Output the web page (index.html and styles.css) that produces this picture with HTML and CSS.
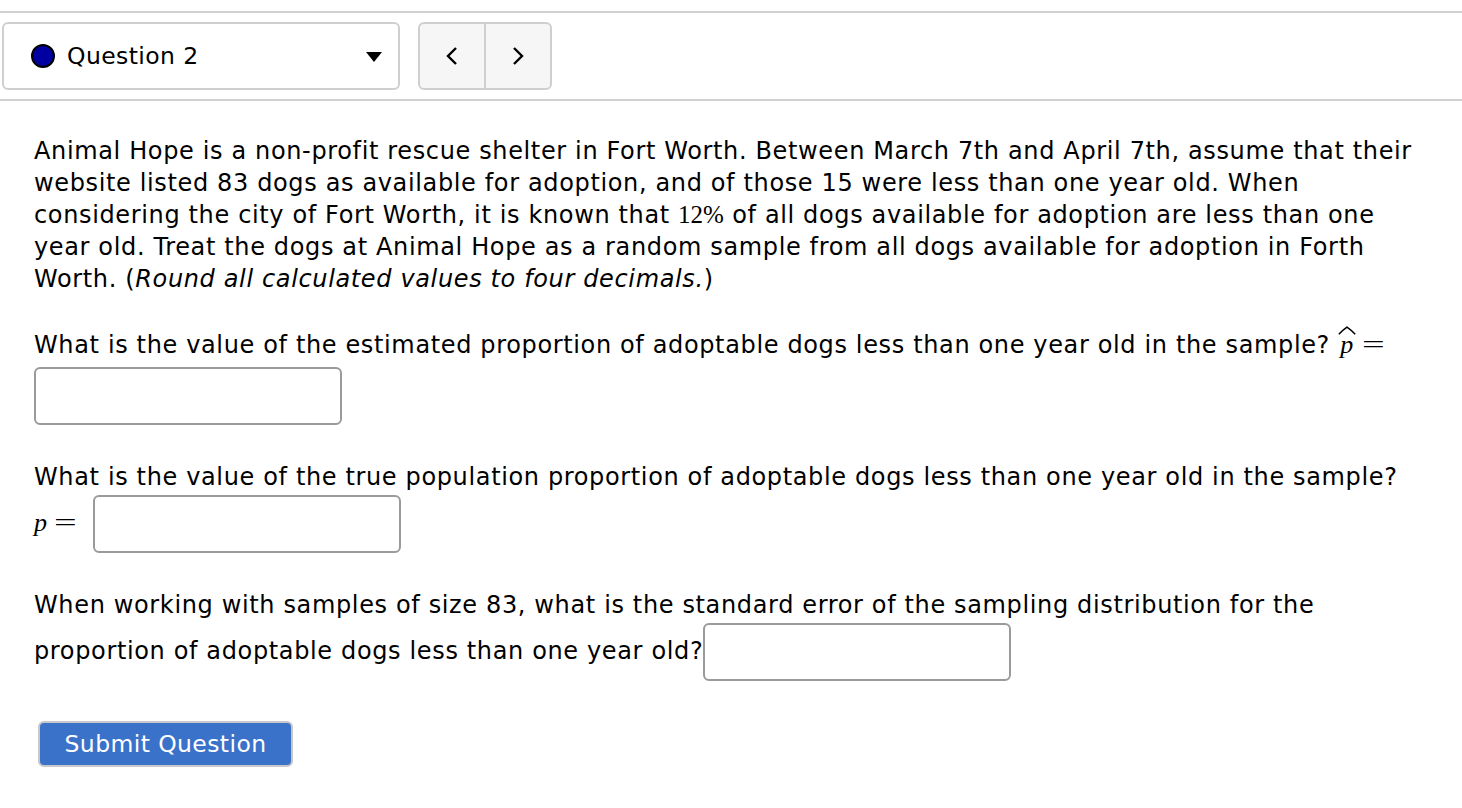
FILE: index.html
```html
<!DOCTYPE html>
<html lang="en">
<head>
<meta charset="utf-8">
<title>Question 2</title>
<link rel="stylesheet" href="styles.css">
</head>
<body>
<div class="header">
  <div class="qselect">
    <span class="dot"></span>
    <span class="qlabel">Question 2</span>
    <svg class="caret" width="16" height="10" viewBox="0 0 16 10"><path d="M0 0H16L8 10Z" fill="#000"/></svg>
  </div>
  <div class="nav">
    <button class="navbtn" type="button" aria-label="Previous">
      <svg width="14" height="20" viewBox="0 0 14 20"><path d="M11 2L3 10L11 18" fill="none" stroke="#000" stroke-width="2.4"/></svg>
    </button>
    <button class="navbtn" type="button" aria-label="Next">
      <svg width="14" height="20" viewBox="0 0 14 20"><path d="M3 2L11 10L3 18" fill="none" stroke="#000" stroke-width="2.4"/></svg>
    </button>
  </div>
</div>

<div class="content">
  <p class="intro">Animal Hope is a non-profit rescue shelter in Fort Worth. Between March 7th and April 7th, assume that their website listed 83 dogs as available for adoption, and of those 15 were less than one year old. When considering the city of Fort Worth, it is known that <span class="math num">12%</span> of all dogs available for adoption are less than one year old. Treat the dogs at Animal Hope as a random sample from all dogs available for adoption in Forth Worth. (<em>Round all calculated values to four decimals.</em>)</p>

  <div class="question q1">What is the value of the estimated proportion of adoptable dogs less than one year old in the sample? <span class="math"><span class="phat">p<svg class="hat" width="18" height="9" viewBox="0 0 18 9"><path d="M0.8 8.2Q5 4 9 1.2Q13 4 17.2 8.2" fill="none" stroke="#000" stroke-width="1.5"/></svg></span> <span class="eq">=</span></span> <input class="answer" type="text"></div>

  <div class="question q2">What is the value of the true population proportion of adoptable dogs less than one year old in the sample? <span class="math"><i>p</i> <span class="eq">=</span></span><input class="answer" type="text"></div>

  <div class="question q3">When working with samples of size 83, what is the standard error of the sampling distribution for the proportion of adoptable dogs less than one year old?<input class="answer" type="text"></div>

  <button class="submit" type="button">Submit Question</button>
</div>
</body>
</html>
```

FILE: styles.css
```css
html, body {
  margin: 0;
  padding: 0;
  background: #fff;
}
body {
  font-family: "DejaVu Sans", "Open Sans", sans-serif;
  font-size: 24px;
  letter-spacing: 0.64px;
  color: #000;
}
.header {
  margin-top: 11px;
  border-top: 2px solid #d0d0d0;
  border-bottom: 2px solid #d0d0d0;
  padding: 9px 0 9px 2px;
  display: flex;
  gap: 18px;
}
.qselect {
  box-sizing: border-box;
  width: 398px;
  height: 68px;
  border: 2px solid #cfcfcf;
  border-radius: 6px;
  display: flex;
  align-items: center;
  padding: 0 16px 0 27px;
}
.dot {
  box-sizing: border-box;
  width: 24px;
  height: 24px;
  border-radius: 50%;
  background: #0000a0;
  border: 2px solid #000;
  margin-right: 12px;
}
.qlabel {
  font-size: 23.5px;
  letter-spacing: 0.4px;
}
.caret {
  margin-left: auto;
  margin-top: 2px;
}
.nav {
  box-sizing: border-box;
  width: 134px;
  height: 68px;
  border: 2px solid #cfcfcf;
  border-radius: 6px;
  background: #f6f6f6;
  display: flex;
  overflow: hidden;
}
.navbtn {
  flex: 1;
  border: 0;
  background: transparent;
  padding: 0;
  display: flex;
  align-items: center;
  justify-content: center;
}
.navbtn + .navbtn {
  border-left: 2px solid #cfcfcf;
}
.content {
  padding: 34px 37px 0 34px;
  line-height: 32px;
}
.intro {
  margin: 0 0 34px 0;
}
.intro em {
  font-style: italic;
}
.math {
  font-family: "Liberation Serif", "DejaVu Serif", serif;
  font-size: 26px;
  letter-spacing: 0;
  white-space: nowrap;
}
.num {
  font-size: 25px;
}
.math i, .phat {
  font-style: italic;
}
.phat {
  position: relative;
  display: inline-block;
  padding: 0 2px;
}
.hat {
  position: absolute;
  left: 0;
  top: -3px;
}
.eq {
  display: inline-block;
  transform: scaleX(1.55);
  margin: 0 6px 0 4px;
}
.q2 .eq {
  margin-right: 21px;
}
.question {
  margin: 0 0 34px 0;
}
.answer {
  box-sizing: border-box;
  width: 308px;
  height: 58px;
  border: 2px solid #9a9a9a;
  border-radius: 6px;
  vertical-align: middle;
  margin: 2px 0;
  font: inherit;
  padding: 0 8px;
}
.q1 .answer {
  margin-top: 6px;
}
.submit {
  box-sizing: border-box;
  margin: 4px 0 0 4px;
  width: 255px;
  height: 46px;
  background: #3a72c9;
  color: #fff;
  border: 2px solid #c8c8c8;
  border-radius: 6px;
  font-family: inherit;
  font-size: 23.5px;
  letter-spacing: 0.4px;
  padding: 0;
}
```
